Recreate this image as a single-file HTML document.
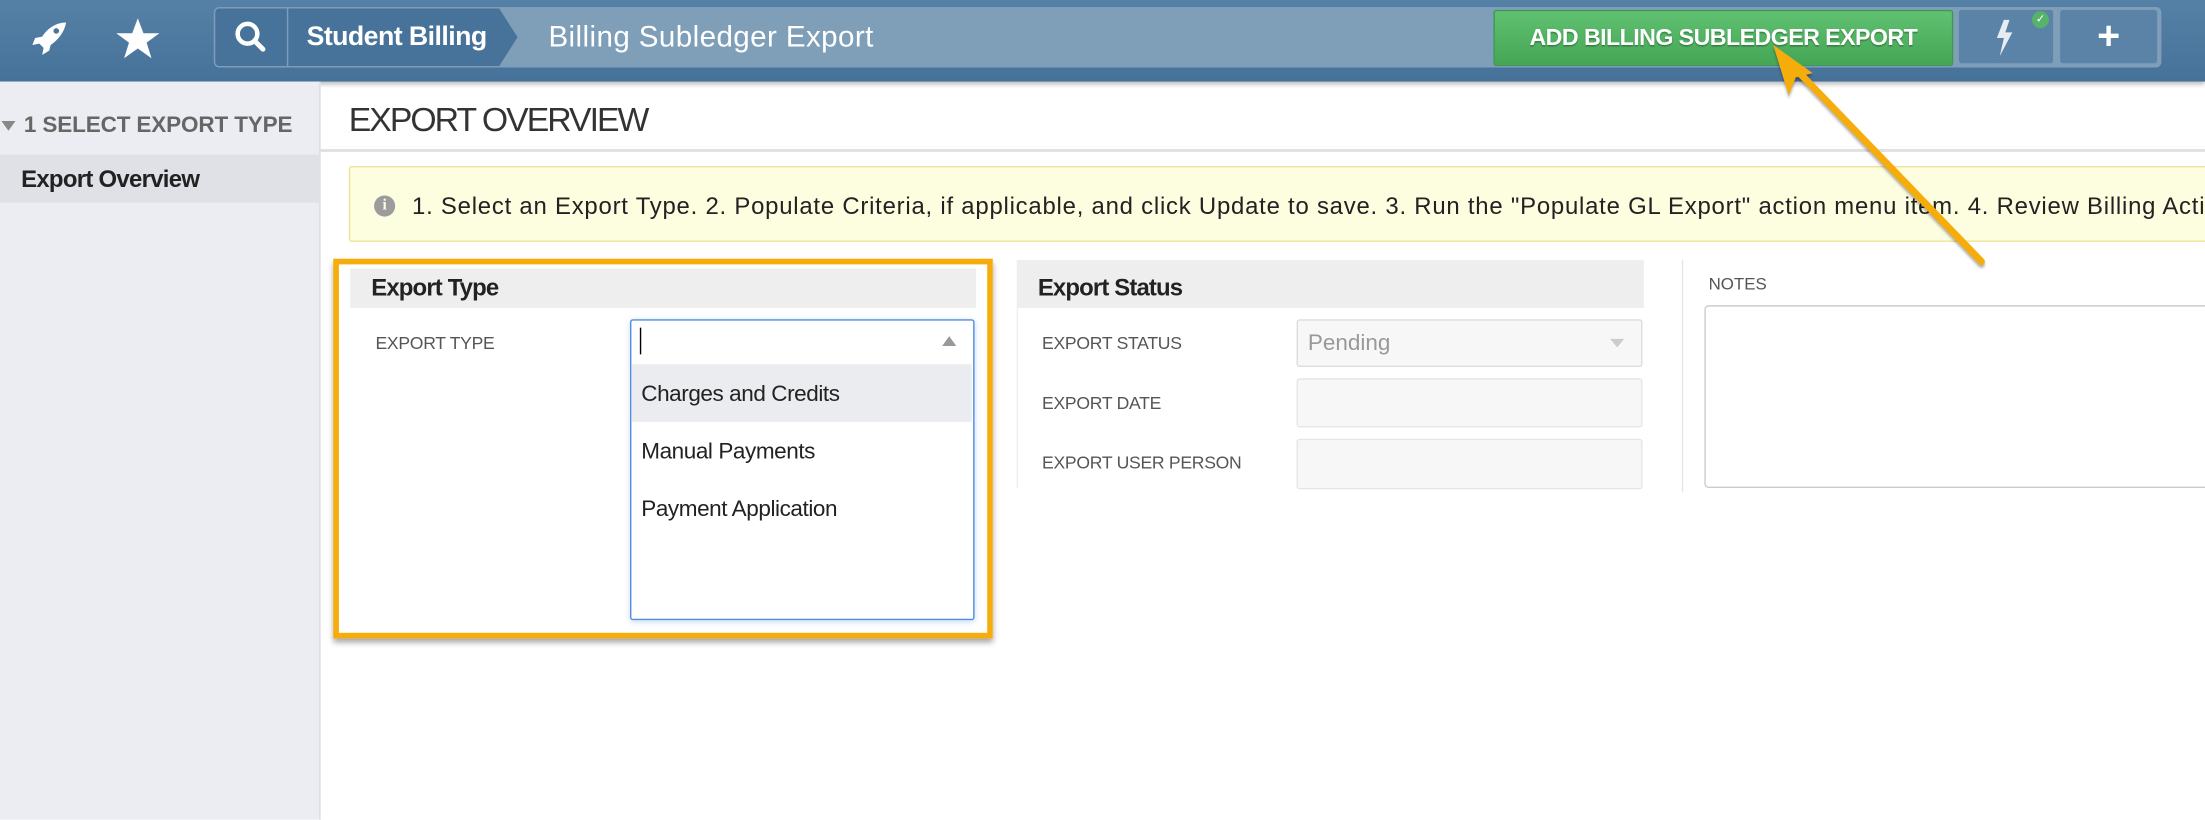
<!DOCTYPE html>
<html><head><meta charset="utf-8">
<style>
html,body{margin:0;padding:0;width:2205px;height:820px;overflow:hidden;background:#fff;}
#s{width:1568px;height:583px;transform:scale(1.40625);transform-origin:0 0;position:relative;font-family:"Liberation Sans",sans-serif;overflow:hidden;}
.a{position:absolute;}
.hdr{left:0;top:0;width:1568px;height:58px;background:linear-gradient(#5581a6,#46729a);box-shadow:0 2px 3px rgba(0,0,0,.25);}
.bc{left:152px;top:5px;width:1383px;height:41px;border:1px solid #7d9dbb;border-radius:4px;background:#7f9fb9;overflow:hidden;}
.lbl{font-size:12.5px;color:#555;letter-spacing:-.2px;}
.inp{background:#f7f7f7;border:1px solid #e6e6e6;border-radius:2px;}
</style></head><body><div id="s">
<div class="a hdr"></div>
<svg class="a" style="left:20px;top:12px" width="30" height="30" viewBox="0 0 30 30"><path d="M27 4 C20 4 14 8 10 14 L5 15 L3 20 L8 19 L11 22 L10 27 L15 24 L16 20 C22 16 26 10 27 4Z" fill="#fff"/><circle cx="20" cy="10" r="2" fill="#4a769c"/></svg>
<svg class="a" style="left:82px;top:11px" width="32" height="32" viewBox="0 0 24 24"><path d="M12 1.5l3 8h8.5l-6.8 5 2.6 8.3L12 17.6l-7.3 5.2 2.6-8.3-6.8-5H9z" fill="#fff"/></svg>
<div class="a bc">
 <div class="a" style="left:0;top:0;width:51px;height:41px;background:#47729a;border-right:1px solid #7d9dbb"></div>
 <svg class="a" style="left:12px;top:7px" width="26" height="26" viewBox="0 0 26 26"><circle cx="11" cy="11" r="7" fill="none" stroke="#fff" stroke-width="3.2"/><path d="M16 16l6 6" stroke="#fff" stroke-width="3.5" stroke-linecap="round"/></svg>
 <svg class="a" style="left:52px;top:0" width="165" height="41"><path d="M0 0H150L163 20.5 150 41H0Z" fill="#47729a"/></svg>
 <div class="a" style="left:65px;top:10px;color:#fff;font-weight:bold;font-size:19px;letter-spacing:-.4px">Student Billing</div>
 <div class="a" style="left:237px;top:9px;color:#fff;font-size:21px;letter-spacing:.3px">Billing Subledger Export</div>
 <div class="a" style="left:909px;top:1px;width:325px;height:38px;background:linear-gradient(#5fc171,#45a655);border:1px solid #3c9a4d;border-radius:2px;color:#fff;font-weight:bold;font-size:16.5px;text-align:center;line-height:38px;letter-spacing:-.4px;text-shadow:0 1px 1px rgba(0,0,0,.3)">ADD BILLING SUBLEDGER EXPORT</div>
 <div class="a" style="left:1240px;top:1px;width:67px;height:38px;background:#5b83a8;border-radius:2px"></div>
 <svg class="a" style="left:1264px;top:8px" width="18" height="26" viewBox="0 0 18 26"><path d="M8 0L3 13h5L5 26 14 9H9L12 0Z" fill="#fff" opacity=".85"/></svg>
 <div class="a" style="left:1292px;top:2px;width:12px;height:12px;border-radius:50%;background:#57b36b;color:#fff;font-size:8px;text-align:center;line-height:12px">✓</div>
 <div class="a" style="left:1312px;top:1px;width:69px;height:38px;background:#5b83a8;border-radius:2px;color:#fff;font-size:28px;font-weight:bold;text-align:center;line-height:38px">+</div>
</div>
<div class="a" style="left:0;top:58px;width:227px;height:525px;background:#ebedf2;border-right:1px solid #dcdde2"></div>
<div class="a" style="left:1px;top:86px;width:0;height:0;border-left:5px solid transparent;border-right:5px solid transparent;border-top:7px solid #888"></div>
<div class="a" style="left:17px;top:81px;font-size:16px;font-weight:bold;color:#666;letter-spacing:-.1px">1 SELECT EXPORT TYPE</div>
<div class="a" style="left:0;top:110px;width:227px;height:34px;background:#dfe1e7"></div>
<div class="a" style="left:15px;top:118px;font-size:17px;font-weight:bold;color:#222;letter-spacing:-.5px">Export Overview</div>
<div class="a" style="left:248px;top:72px;font-size:24px;color:#333;letter-spacing:-1.4px">EXPORT OVERVIEW</div>
<div class="a" style="left:228px;top:106px;width:1340px;height:2px;background:#e0e0e0"></div>
<div class="a" style="left:248px;top:118px;width:1330px;height:52px;background:#fdfde0;border:1px solid #eee29a;border-radius:2px;overflow:hidden"></div>
<div class="a" style="left:266px;top:139px;width:15px;height:15px;border-radius:50%;background:#9c9c9c;color:#fdfde0;font-size:11px;font-weight:bold;text-align:center;line-height:15px;font-family:'Liberation Serif',serif">i</div>
<div class="a" style="left:293px;top:137px;font-size:17px;color:#222;white-space:nowrap;letter-spacing:.55px">1. Select an Export Type. 2. Populate Criteria, if applicable, and click Update to save. 3. Run the "Populate GL Export" action menu item. 4. Review Billing Activity t</div>
<div class="a" style="left:237px;top:184px;width:461px;height:262px;border:4px solid #f6ac0b;box-shadow:0 3px 4px rgba(0,0,0,.35)"></div>
<div class="a" style="left:249px;top:191px;width:445px;height:28px;background:#eee"></div>
<div class="a" style="left:264px;top:195px;font-size:17px;font-weight:bold;color:#222;letter-spacing:-.6px">Export Type</div>
<div class="a lbl" style="left:267px;top:237px">EXPORT TYPE</div>
<div class="a" style="left:448px;top:227px;width:243px;height:212px;border:1px solid #4f8ee0;border-radius:2px;background:#fff;box-shadow:0 1px 4px rgba(80,140,220,.3)"></div>
<div class="a" style="left:455px;top:233px;width:1px;height:19px;background:#000"></div>
<div class="a" style="left:670px;top:239px;width:0;height:0;border-left:5px solid transparent;border-right:5px solid transparent;border-bottom:7px solid #999"></div>
<div class="a" style="left:449px;top:259px;width:242px;height:41px;background:#ebecf0"></div>
<div class="a" style="left:456px;top:272px;font-size:16px;color:#222;letter-spacing:-.3px">Charges and Credits</div>
<div class="a" style="left:456px;top:313px;font-size:16px;color:#222;letter-spacing:-.3px">Manual Payments</div>
<div class="a" style="left:456px;top:354px;font-size:16px;color:#222;letter-spacing:-.3px">Payment Application</div>
<div class="a" style="left:723px;top:185px;width:446px;height:34px;background:#eee"></div>
<div class="a" style="left:723px;top:219px;width:1px;height:128px;background:#eee"></div>
<div class="a" style="left:738px;top:195px;font-size:17px;font-weight:bold;color:#222;letter-spacing:-.6px">Export Status</div>
<div class="a lbl" style="left:741px;top:237px">EXPORT STATUS</div>
<div class="a lbl" style="left:741px;top:280px">EXPORT DATE</div>
<div class="a lbl" style="left:741px;top:322px">EXPORT USER PERSON</div>
<div class="a inp" style="left:922px;top:227px;width:244px;height:32px;border-color:#ddd"></div>
<div class="a" style="left:930px;top:236px;font-size:16px;color:#999">Pending</div>
<div class="a" style="left:1145px;top:241px;width:0;height:0;border-left:5px solid transparent;border-right:5px solid transparent;border-top:6px solid #ccc"></div>
<div class="a inp" style="left:922px;top:269px;width:244px;height:33px"></div>
<div class="a inp" style="left:922px;top:312px;width:244px;height:34px"></div>
<div class="a" style="left:1196px;top:185px;width:1px;height:165px;background:#e5e5e5"></div>
<div class="a" style="left:1215px;top:195px;font-size:12px;color:#555">NOTES</div>
<div class="a" style="left:1212px;top:217px;width:370px;height:128px;border:1px solid #ccc;border-radius:3px"></div>
<svg class="a" style="left:0;top:0" width="1568" height="583"><g style="filter:drop-shadow(0 2px 1px rgba(0,0,0,.3))"><path d="M1409 186L1273 45" stroke="#f6ac0b" stroke-width="5" stroke-linecap="round"/><path d="M1261 32L1289 52 1277 55 1272 68Z" fill="#f6ac0b"/></g></svg>
</div></body></html>
